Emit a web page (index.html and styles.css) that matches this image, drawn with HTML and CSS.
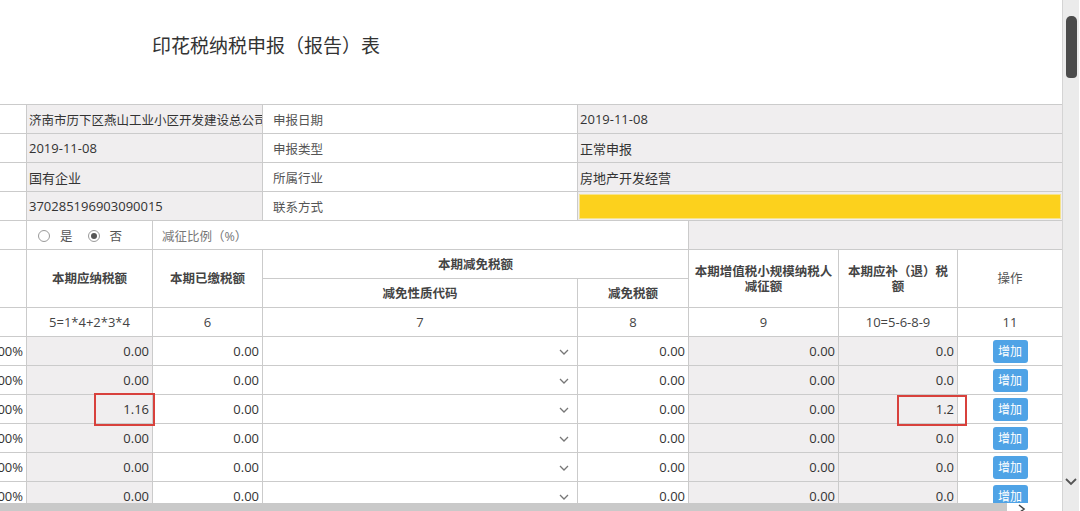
FILE: index.html
```html
<!DOCTYPE html>
<html lang="zh-CN">
<head>
  <meta charset="UTF-8">
  <meta name="viewport" content="width=device-width, initial-scale=1.0">
  <title>印花税纳税申报（报告）表</title>
  <link rel="stylesheet" href="styles.css">
</head>
<body>
  <div class="screen">
    <div class="viewport">
      <div class="content">
        <h1 class="title">印花税纳税申报（报告）表</h1>
        <table class="form">
          <colgroup>
            <col class="c0"><col class="c1"><col class="c2"><col class="c3">
            <col class="c4"><col class="c5"><col class="c6"><col class="c7">
          </colgroup>
          <tr>
            <td></td>
            <td class="val gray clip" colspan="2">济南市历下区燕山工业小区开发建设总公司</td>
            <td class="label">申报日期</td>
            <td class="val gray" colspan="4">2019-11-08</td>
          </tr>
          <tr>
            <td></td>
            <td class="val gray" colspan="2">2019-11-08</td>
            <td class="label">申报类型</td>
            <td class="val gray" colspan="4">正常申报</td>
          </tr>
          <tr>
            <td></td>
            <td class="val gray" colspan="2">国有企业</td>
            <td class="label">所属行业</td>
            <td class="val gray" colspan="4">房地产开发经营</td>
          </tr>
          <tr>
            <td></td>
            <td class="val gray" colspan="2">370285196903090015</td>
            <td class="label">联系方式</td>
            <td class="val gray" colspan="4"><div class="phone"></div></td>
          </tr>
          <tr>
            <td></td>
            <td class="radios"><span class="radio"></span>是<span class="radio on"></span>否</td>
            <td class="label hint" colspan="3">减征比例（%）</td>
            <td class="gray" colspan="3"></td>
          </tr>
          <tr>
            <td rowspan="2"></td>
            <td class="head" rowspan="2">本期应纳税额</td>
            <td class="head" rowspan="2">本期已缴税额</td>
            <td class="head" colspan="2">本期减免税额</td>
            <td class="head" rowspan="2">本期增值税小规模纳税人减征额</td>
            <td class="head" rowspan="2">本期应补（退）税额</td>
            <td class="head plain" rowspan="2">操作</td>
          </tr>
          <tr>
            <td class="head">减免性质代码</td>
            <td class="head">减免税额</td>
          </tr>
          <tr class="idx">
            <td></td>
            <td>5=1*4+2*3*4</td>
            <td>6</td>
            <td>7</td>
            <td>8</td>
            <td>9</td>
            <td>10=5-6-8-9</td>
            <td>11</td>
          </tr>
          <tr class="row">
            <td class="num">100.00%</td>
            <td class="num gray">0.00</td>
            <td class="num">0.00</td>
            <td class="sel"><svg width="10" height="6" viewBox="0 0 10 6"><polyline points="1,1 5,5 9,1" fill="none" stroke="#777" stroke-width="1.3"/></svg></td>
            <td class="num">0.00</td>
            <td class="num gray">0.00</td>
            <td class="num gray">0.0</td>
            <td class="act"><span class="btn">增加</span></td>
          </tr>
          <tr class="row">
            <td class="num">100.00%</td>
            <td class="num gray">0.00</td>
            <td class="num">0.00</td>
            <td class="sel"><svg width="10" height="6" viewBox="0 0 10 6"><polyline points="1,1 5,5 9,1" fill="none" stroke="#777" stroke-width="1.3"/></svg></td>
            <td class="num">0.00</td>
            <td class="num gray">0.00</td>
            <td class="num gray">0.0</td>
            <td class="act"><span class="btn">增加</span></td>
          </tr>
          <tr class="row">
            <td class="num">100.00%</td>
            <td class="num gray mark">1.16<span class="ring ring-a"></span></td>
            <td class="num">0.00</td>
            <td class="sel"><svg width="10" height="6" viewBox="0 0 10 6"><polyline points="1,1 5,5 9,1" fill="none" stroke="#777" stroke-width="1.3"/></svg></td>
            <td class="num">0.00</td>
            <td class="num gray">0.00</td>
            <td class="num gray mark">1.2<span class="ring ring-b"></span></td>
            <td class="act"><span class="btn">增加</span></td>
          </tr>
          <tr class="row">
            <td class="num">100.00%</td>
            <td class="num gray">0.00</td>
            <td class="num">0.00</td>
            <td class="sel"><svg width="10" height="6" viewBox="0 0 10 6"><polyline points="1,1 5,5 9,1" fill="none" stroke="#777" stroke-width="1.3"/></svg></td>
            <td class="num">0.00</td>
            <td class="num gray">0.00</td>
            <td class="num gray">0.0</td>
            <td class="act"><span class="btn">增加</span></td>
          </tr>
          <tr class="row">
            <td class="num">100.00%</td>
            <td class="num gray">0.00</td>
            <td class="num">0.00</td>
            <td class="sel"><svg width="10" height="6" viewBox="0 0 10 6"><polyline points="1,1 5,5 9,1" fill="none" stroke="#777" stroke-width="1.3"/></svg></td>
            <td class="num">0.00</td>
            <td class="num gray">0.00</td>
            <td class="num gray">0.0</td>
            <td class="act"><span class="btn">增加</span></td>
          </tr>
          <tr class="row">
            <td class="num">100.00%</td>
            <td class="num gray">0.00</td>
            <td class="num">0.00</td>
            <td class="sel"><svg width="10" height="6" viewBox="0 0 10 6"><polyline points="1,1 5,5 9,1" fill="none" stroke="#777" stroke-width="1.3"/></svg></td>
            <td class="num">0.00</td>
            <td class="num gray">0.00</td>
            <td class="num gray">0.0</td>
            <td class="act"><span class="btn">增加</span></td>
          </tr>
          <tr class="row">
            <td class="num">100.00%</td>
            <td class="num gray">0.00</td>
            <td class="num">0.00</td>
            <td class="sel"><svg width="10" height="6" viewBox="0 0 10 6"><polyline points="1,1 5,5 9,1" fill="none" stroke="#777" stroke-width="1.3"/></svg></td>
            <td class="num">0.00</td>
            <td class="num gray">0.00</td>
            <td class="num gray">0.0</td>
            <td class="act"><span class="btn">增加</span></td>
          </tr>
        </table>
      </div>
      <div class="hscroll">
        <div class="hbar"></div>
        <div class="hend">
          <svg width="8" height="10" viewBox="0 0 8 10"><polyline points="1,1 6,5 1,9" fill="none" stroke="#444" stroke-width="1.6"/></svg>
        </div>
      </div>
    </div>
    <div class="vscroll">
      <div class="thumb"></div>
      <svg class="down" width="12" height="8" viewBox="0 0 12 8"><polyline points="1,1 6,6 11,1" fill="none" stroke="#555" stroke-width="1.8"/></svg>
    </div>
  </div>
</body>
</html>
```

FILE: styles.css
```css
body {
  margin: 0;
  font-family: "Open Sans", "Noto Sans CJK SC", sans-serif;
  color: #333;
  background: #fff;
}
.screen {
  display: flex;
  width: 1080px;
  height: 511px;
  overflow: hidden;
}
.viewport {
  width: 1062px;
  display: flex;
  flex-direction: column;
}
.content {
  flex: 1;
  min-height: 0;
  overflow: hidden;
}
.title {
  margin: 0;
  height: 104px;
  box-sizing: border-box;
  padding: 34px 0 0 152px;
  font-size: 19px;
  line-height: 24px;
  font-weight: normal;
  color: #333;
}

/* form table */
.form {
  border-collapse: collapse;
  table-layout: fixed;
  width: 1106px;
  margin-left: -44px;
  font-size: 12.5px;
}
.c0 { width: 70px; }
.c1 { width: 126px; }
.c2 { width: 110px; }
.c3 { width: 315px; }
.c4 { width: 111px; }
.c5 { width: 150px; }
.c6 { width: 119px; }
.c7 { width: 105px; }
.form td {
  border: 1px solid #cbcbcb;
  height: 28px;
  padding: 0;
  white-space: nowrap;
  vertical-align: middle;
}
.gray { background: #f0eeef; }
.val {
  padding-left: 2px !important;
  font-size: 13px;
  color: #333;
}
.clip {
  overflow: hidden;
  font-size: 12.5px;
}
.label {
  padding-left: 10px !important;
  color: #555;
}
.hint { padding-left: 9px !important; color: #777; }
.phone {
  height: 23px;
  margin: 0 1px 0 -1px;
  background: #fcd11d;
  border: 1px solid #f6e48c;
}
.radios {
  padding-left: 11px !important;
  color: #555;
}
.radio {
  display: inline-block;
  width: 10px;
  height: 10px;
  border: 1px solid #9a9a9a;
  border-radius: 50%;
  vertical-align: -1px;
  margin-right: 10px;
  position: relative;
  background: #fff;
}
.radio.on { margin-left: 15px; }
.radio.on::after {
  content: "";
  position: absolute;
  left: 2px;
  top: 2px;
  width: 6px;
  height: 6px;
  border-radius: 50%;
  background: #555;
}
.head {
  text-align: center;
  font-weight: bold;
  color: #444;
  white-space: normal !important;
  padding: 0 5px !important;
  line-height: 15px;
}
.head.plain { font-weight: normal; color: #555; }
.idx td {
  text-align: center;
  font-size: 13px;
  color: #444;
}
.num {
  text-align: right;
  padding-right: 3px !important;
  font-size: 13px;
  color: #333;
}
.sel {
  text-align: right;
  padding-right: 8px !important;
}
.sel svg { display: inline-block; vertical-align: middle; }
.act { text-align: center; }
.btn {
  display: inline-block;
  width: 35px;
  height: 23px;
  line-height: 23px;
  border-radius: 3px;
  background: #4fa3e6;
  color: #fff;
  font-size: 12px;
  vertical-align: middle;
}
.mark { position: relative; }
.ring {
  position: absolute;
  border: 2px solid #d8413c;
}
.ring-a { left: 67px; right: -3px; top: -2px; bottom: -3px; }
.ring-b { left: 58px; right: -10px; top: 0; bottom: -3px; }

/* scrollbars */
.hscroll {
  height: 8px;
  display: flex;
  flex-shrink: 0;
}
.hbar {
  width: 1007px;
  background: #c9c9c9;
}
.hend {
  flex: 1;
  padding-left: 11px;
  overflow: hidden;
}
.hend svg { display: block; margin-top: 1px; }
.vscroll {
  width: 17px;
  border-left: 1px solid #d4d4d4;
  background: #ebebeb;
  display: flex;
  flex-direction: column;
  align-items: center;
  justify-content: space-between;
  padding: 16px 0 25px;
  box-sizing: border-box;
}
.thumb {
  width: 11px;
  height: 62px;
  border-radius: 5px 5px 4px 4px;
  background: #4b4b4b;
}
.down { display: block; }
```
